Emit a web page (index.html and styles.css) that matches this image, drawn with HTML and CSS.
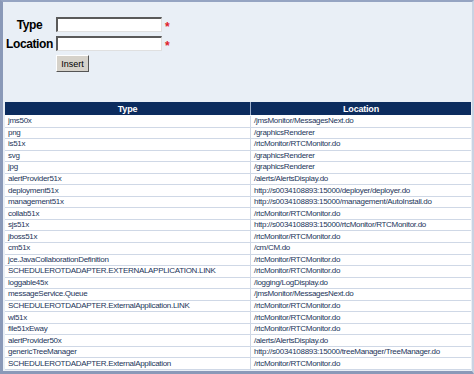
FILE: index.html
```html
<!DOCTYPE html>
<html>
<head>
<meta charset="utf-8">
<link rel="stylesheet" href="styles.css">
</head>
<body>
<div class="frame">
  <div class="form">
    <div class="frow">
      <span class="label">Type</span>
      <span class="field"></span>
      <span class="req">*</span>
    </div>
    <div class="frow">
      <span class="label">Location</span>
      <span class="field"></span>
      <span class="req">*</span>
    </div>
    <div class="frow">
      <span class="label"></span>
      <span class="btn">Insert</span>
    </div>
  </div>
  <table class="list">
    <thead>
      <tr><th class="c1">Type</th><th>Location</th></tr>
    </thead>
    <tbody>
      <tr><td>jms50x</td><td>/jmsMonitor/MessagesNext.do</td></tr>
      <tr><td>png</td><td>/graphicsRenderer</td></tr>
      <tr><td>is51x</td><td>/rtcMonitor/RTCMonitor.do</td></tr>
      <tr><td>svg</td><td>/graphicsRenderer</td></tr>
      <tr><td>jpg</td><td>/graphicsRenderer</td></tr>
      <tr><td>alertProvider51x</td><td>/alerts/AlertsDisplay.do</td></tr>
      <tr><td>deployment51x</td><td>http://s0034108893:15000/deployer/deployer.do</td></tr>
      <tr><td>management51x</td><td>http://s0034108893:15000/management/AutoInstall.do</td></tr>
      <tr><td>collab51x</td><td>/rtcMonitor/RTCMonitor.do</td></tr>
      <tr><td>sjs51x</td><td>http://s0034108893:15000/rtcMonitor/RTCMonitor.do</td></tr>
      <tr><td>jboss51x</td><td>/rtcMonitor/RTCMonitor.do</td></tr>
      <tr><td>cm51x</td><td>/cm/CM.do</td></tr>
      <tr><td>jce.JavaCollaborationDefinition</td><td>/rtcMonitor/RTCMonitor.do</td></tr>
      <tr><td>SCHEDULEROTDADAPTER.EXTERNALAPPLICATION.LINK</td><td>/rtcMonitor/RTCMonitor.do</td></tr>
      <tr><td>loggable45x</td><td>/logging/LogDisplay.do</td></tr>
      <tr><td>messageService.Queue</td><td>/jmsMonitor/MessagesNext.do</td></tr>
      <tr><td>SCHEDULEROTDADAPTER.ExternalApplication.LINK</td><td>/rtcMonitor/RTCMonitor.do</td></tr>
      <tr><td>wl51x</td><td>/rtcMonitor/RTCMonitor.do</td></tr>
      <tr><td>file51xEway</td><td>/rtcMonitor/RTCMonitor.do</td></tr>
      <tr><td>alertProvider50x</td><td>/alerts/AlertsDisplay.do</td></tr>
      <tr><td>genericTreeManager</td><td>http://s0034108893:15000/treeManager/TreeManager.do</td></tr>
      <tr><td>SCHEDULEROTDADAPTER.ExternalApplication</td><td>/rtcMonitor/RTCMonitor.do</td></tr>
    </tbody>
  </table>
</div>
</body>
</html>
```
FILE: styles.css
```css
html, body {
  margin: 0;
  padding: 0;
}
body {
  width: 474px;
  height: 374px;
  overflow: hidden;
  background: #e9eff6;
  font-family: "Liberation Sans", Arial, sans-serif;
}
.frame {
  box-sizing: border-box;
  width: 474px;
  height: 374px;
  border-top: 2px solid #95a4c2;
  border-left: 3px solid #8a99b8;
  border-bottom: 3px solid #8a99b8;
  border-right: 2px solid #c9d3e3;
  background: #e9eff6;
  padding-top: 15px;
}
.form {
  display: flex;
  flex-direction: column;
  gap: 4px;
  padding-left: 3px;
}
.frow {
  display: flex;
  align-items: center;
  height: 15px;
}
.frow:last-child {
  height: 17px;
}
.label {
  width: 47px;
  text-align: center;
  font-weight: bold;
  font-size: 12px;
  letter-spacing: -0.4px;
  color: #000;
  margin-right: 3px;
}
.field {
  box-sizing: border-box;
  width: 106px;
  height: 15px;
  background: #fff;
  border-top: 2px solid #5a5a5a;
  border-left: 2px solid #5a5a5a;
  border-bottom: 1px solid #e0e0e0;
  border-right: 1px solid #e0e0e0;
}
.req {
  color: #e0202a;
  font-size: 12px;
  font-weight: bold;
  margin-left: 3px;
  margin-top: 5px;
}
.btn {
  box-sizing: border-box;
  width: 33px;
  height: 17px;
  background: #d6d2ca;
  border-top: 1px solid #fff;
  border-left: 1px solid #fff;
  border-right: 1px solid #555;
  border-bottom: 1px solid #555;
  font-size: 9px;
  color: #000;
  display: flex;
  align-items: center;
  justify-content: center;
}
.list {
  margin-top: 30px;
  margin-left: 2px;
  width: 466px;
  border-collapse: collapse;
  table-layout: fixed;
  background: #fff;
}
.list th {
  background: #0c2c5e;
  color: #fff;
  font-size: 9px;
  letter-spacing: -0.2px;
  font-weight: bold;
  height: 13px;
  padding: 0;
  border-left: 1px solid #9eb0cc;
  border-bottom: 1px solid #ffffff;
}
.list th.c1 {
  width: 245px;
  border-left: none;
}
.list td {
  font-size: 8px;
  letter-spacing: -0.3px;
  color: #23355a;
  height: 10.55px;
  padding: 0 0 0 3px;
  line-height: 10px;
  border-bottom: 1px solid #cfd8e6;
  border-left: 1px solid #cfd8e6;
  white-space: nowrap;
  overflow: hidden;
}
.list td:first-child {
  border-left: none;
}
```
